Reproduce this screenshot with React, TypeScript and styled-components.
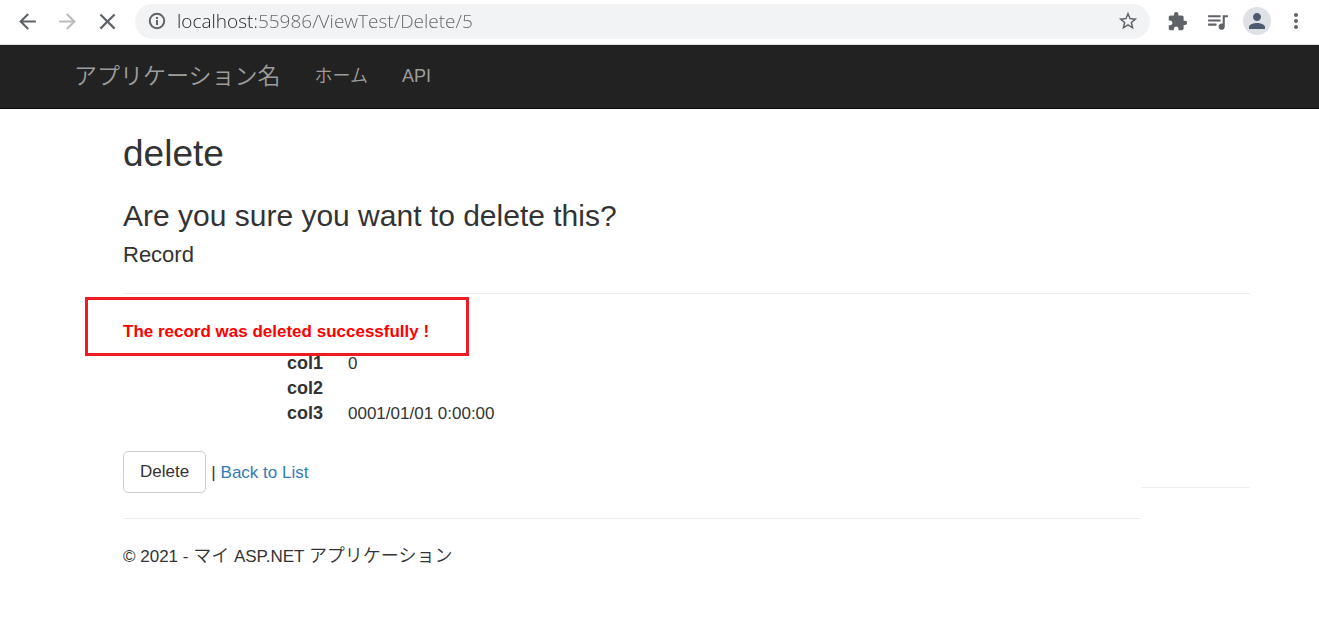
import React from "react";
import styled, { createGlobalStyle } from "styled-components";
import {
  MdArrowBack,
  MdArrowForward,
  MdClose,
  MdExtension,
  MdMoreVert,
  MdPerson,
  MdQueueMusic,
  MdStarBorder,
} from "react-icons/md";

const GlobalStyle = createGlobalStyle`
  *, *::before, *::after { box-sizing: border-box; }
  body {
    margin: 0;
    background: #fff;
    color: #333;
    font-family: "Liberation Sans", "Noto Sans CJK JP", sans-serif;
    font-size: 17px;
    line-height: 25px;
  }
`;

const Toolbar = styled.header`
  display: flex;
  align-items: center;
  height: 45px;
  padding: 0 4px 2px 7px;
  background: #fff;
  border-bottom: 1px solid #dadce0;
`;

const ToolButton = styled.button<{ $muted?: boolean }>`
  display: flex;
  flex: none;
  align-items: center;
  justify-content: center;
  width: 40px;
  height: 40px;
  padding: 0;
  border: 0;
  background: none;
  color: ${(p) => (p.$muted ? "#babcbe" : "#5f6368")};
`;

const MenuButton = styled(ToolButton)`
  width: 38px;
`;

const AddressBar = styled.div`
  display: flex;
  flex: 1;
  align-items: center;
  height: 35px;
  margin: 0 7px 0 8px;
  padding: 0 2px 0 12px;
  border-radius: 18px;
  background: #f1f3f4;
  color: #5f6368;
`;

const InfoSvg = styled.svg`
  flex: none;
  width: 20px;
  height: 20px;
  fill: none;
  stroke: currentColor;
  stroke-width: 2;
`;

const AddressInput = styled.input`
  flex: 1;
  min-width: 0;
  height: 30px;
  margin-left: 10px;
  padding: 0;
  border: 0;
  outline: 0;
  background: linear-gradient(to right, #202124 79px, #5f6368 79px);
  background-clip: text;
  -webkit-background-clip: text;
  color: transparent;
  font-family: "Open Sans", sans-serif;
  font-size: 19px;
  font-weight: 350;
`;

const Avatar = styled.span`
  display: flex;
  align-items: center;
  justify-content: center;
  width: 28px;
  height: 28px;
  border-radius: 50%;
  background: #dee1e6;
  color: #4e5a70;
`;

const Navbar = styled.nav`
  display: flex;
  align-items: center;
  gap: 34px;
  height: 64px;
  padding: 0 74px;
  background: #222;
  border-bottom: 1px solid #080808;
`;

const NavLink = styled.a<{ $brand?: boolean }>`
  color: #9d9d9d;
  font-size: ${(p) => (p.$brand ? 23 : 18)}px;
  font-weight: 350;
  text-decoration: none;
`;

const Page = styled.main`
  padding: 24px 69px 0 123px;
`;

const Title = styled.h2`
  margin: 0 0 25px;
  font-size: 37px;
  font-weight: 400;
  line-height: 41px;
`;

const Question = styled.h3`
  margin: 0;
  font-size: 30px;
  font-weight: 400;
  line-height: 33px;
`;

const RecordTitle = styled.h4`
  margin: 9px 0 25px;
  font-size: 22px;
  font-weight: 400;
  line-height: 27px;
`;

const Rule = styled.hr`
  width: 100%;
  height: 1px;
  margin: 0;
  border: 0;
  background: #eee;
`;

const Message = styled.p`
  position: relative;
  width: fit-content;
  margin: 25px 0 7px;
  color: #f00;
  font-weight: 700;
`;

const Highlight = styled.span`
  position: absolute;
  inset: -22px -40px -12px -38px;
  border: 3px solid #ed1c24;
`;

const Details = styled.dl`
  display: grid;
  grid-template-columns: 200px 1fr;
  column-gap: 25px;
  margin: 0 0 25px;
`;

const Term = styled.dt`
  font-size: 18px;
  font-weight: 700;
  text-align: right;
`;

const Value = styled.dd`
  margin: 0;
`;

const Bottom = styled.div`
  display: grid;
  grid-template-columns: 1fr 109px;
`;

const Actions = styled.form`
  display: flex;
  align-items: center;
  gap: 5px;
  margin-bottom: 25px;
`;

const DeleteButton = styled.button`
  height: 42px;
  padding: 0 16px 2px;
  border: 1px solid #ccc;
  border-radius: 5px;
  background: #fff;
  color: #333;
  font: inherit;
`;

const ListLink = styled.a`
  color: #337ab7;
  text-decoration: none;
`;

const SideRule = styled.div`
  padding-top: 36px;
`;

const Footer = styled.footer`
  padding: 25px 0;
  font-weight: 350;
`;

const Kana = styled.span`
  font-size: 18px;
`;

const fields = [
  { name: "col1", value: "0" },
  { name: "col2", value: "" },
  { name: "col3", value: "0001/01/01 0:00:00" },
];

function InfoIcon() {
  return (
    <InfoSvg viewBox="0 0 20 20" aria-hidden="true">
      <circle cx="10" cy="10" r="7.2" />
      <path d="M10 9v5M10 6v2" />
    </InfoSvg>
  );
}

export default function App() {
  return (
    <>
      <GlobalStyle />
      <Toolbar>
        <ToolButton type="button" aria-label="Back">
          <MdArrowBack size={25} />
        </ToolButton>
        <ToolButton type="button" aria-label="Forward" $muted>
          <MdArrowForward size={25} />
        </ToolButton>
        <ToolButton type="button" aria-label="Stop">
          <MdClose size={27} />
        </ToolButton>
        <AddressBar>
          <InfoIcon />
          <AddressInput
            type="text"
            aria-label="Address"
            defaultValue="localhost:55986/ViewTest/Delete/5"
          />
          <ToolButton type="button" aria-label="Bookmark">
            <MdStarBorder size={22} />
          </ToolButton>
        </AddressBar>
        <ToolButton type="button" aria-label="Extensions">
          <MdExtension size={21} />
        </ToolButton>
        <ToolButton type="button" aria-label="Media">
          <MdQueueMusic size={25} />
        </ToolButton>
        <ToolButton type="button" aria-label="Profile">
          <Avatar>
            <MdPerson size={24} />
          </Avatar>
        </ToolButton>
        <MenuButton type="button" aria-label="Menu">
          <MdMoreVert size={24} />
        </MenuButton>
      </Toolbar>
      <Navbar>
        <NavLink href="#app" $brand>
          アプリケーション名
        </NavLink>
        <NavLink href="#home">ホーム</NavLink>
        <NavLink href="#api">API</NavLink>
      </Navbar>
      <Page>
        <Title>delete</Title>
        <Question>Are you sure you want to delete this?</Question>
        <RecordTitle>Record</RecordTitle>
        <Rule />
        <Message>
          The record was deleted successfully !
          <Highlight />
        </Message>
        <Details>
          {fields.map((f) => (
            <React.Fragment key={f.name}>
              <Term>{f.name}</Term>
              <Value>{f.value}</Value>
            </React.Fragment>
          ))}
        </Details>
        <Bottom>
          <div>
            <Actions onSubmit={(e) => e.preventDefault()}>
              <DeleteButton type="submit">Delete</DeleteButton>
              <span>|</span>
              <ListLink href="#list">Back to List</ListLink>
            </Actions>
            <Rule />
          </div>
          <SideRule>
            <Rule />
          </SideRule>
        </Bottom>
        <Footer>
          © 2021 - <Kana>マイ</Kana> ASP.NET <Kana>アプリケーション</Kana>
        </Footer>
      </Page>
    </>
  );
}
